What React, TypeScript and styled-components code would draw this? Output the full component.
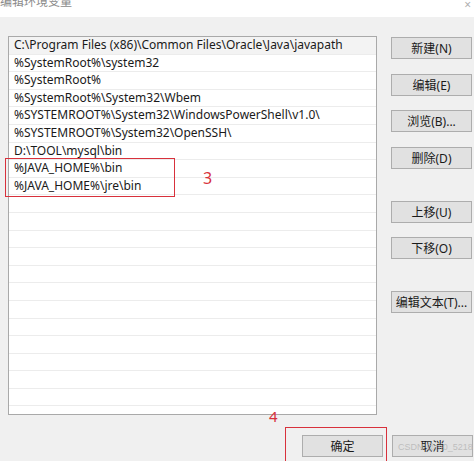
import React from 'react';
import styled, { createGlobalStyle } from 'styled-components';

const GlobalStyle = createGlobalStyle`
    html, body {
        margin: 0;
        padding: 0;
    }
    body {
        width: 474px;
        height: 461px;
        overflow: hidden;
        background: #f0f0f0;
        font-family: "Noto Sans", "Noto Sans CJK SC", sans-serif;
    }
`

const Dialog = styled.div`
    position: relative;
    width: 474px;
    height: 461px;
    overflow: hidden;
    background: #f0f0f0;
`

const TitleBar = styled.div`
    height: 17px;
    background: #ffffff;
    display: flex;
    justify-content: space-between;
    align-items: flex-start;
    overflow: hidden;
    padding: 0 3px 0 0;
`

const Title = styled.span`
    font-family: "Noto Sans CJK SC", sans-serif;
    font-size: 12px;
    line-height: 12px;
    color: #8a8a8a;
    margin-top: -5px;
`

const Close = styled.span`
    font-size: 12px;
    line-height: 10px;
    color: #b0b0b0;
`

const Main = styled.div`
    display: flex;
    padding: 19px 1px 0 8px;
    gap: 14px;
`

const List = styled.div`
    width: 369px;
    height: 379px;
    box-sizing: border-box;
    border: 1px solid #a9a9a9;
    background: #ffffff;
    overflow: hidden;
`

const Row = styled.div<{ $selected?: boolean }>`
    height: 17.6px;
    box-sizing: border-box;
    border-bottom: 1px solid #ececec;
    padding-left: 5px;
    font-size: 12px;
    line-height: 16.6px;
    color: #1a1a1a;
    white-space: nowrap;
    background: ${p => (p.$selected ? '#f3f3f3' : '#ffffff')};
`

const Side = styled.div`
    display: flex;
    flex-direction: column;
    padding-top: 1px;
    gap: 14.5px;
`

const Button = styled.div<{ $spaced?: boolean }>`
    width: 81px;
    height: 22px;
    box-sizing: border-box;
    border: 1px solid #adadad;
    background: #e1e1e1;
    display: flex;
    align-items: center;
    justify-content: center;
    font-family: "Noto Sans", "Noto Sans CJK SC", sans-serif;
    font-size: 12px;
    color: #1a1a1a;
    margin-top: ${p => (p.$spaced ? '17.5px' : '0')};
`

const Footer = styled.div`
    display: flex;
    justify-content: flex-end;
    gap: 9px;
    padding: 20px 1px 0 0;
`

const Mark = styled.div<{ $x: number; $y: number; $w: number; $h: number }>`
    position: absolute;
    left: ${p => p.$x}px;
    top: ${p => p.$y}px;
    width: ${p => p.$w}px;
    height: ${p => p.$h}px;
    border: 1.5px solid #d8313c;
    box-sizing: border-box;
`

const Label = styled.span<{ $x: number; $y: number; $size: number }>`
    position: absolute;
    left: ${p => p.$x}px;
    top: ${p => p.$y}px;
    font-family: "Noto Sans", sans-serif;
    font-size: ${p => p.$size}px;
    line-height: 1;
    color: #d8313c;
`

const Watermark = styled.span`
    position: absolute;
    left: 398px;
    top: 442px;
    font-family: "Liberation Sans", sans-serif;
    font-size: 9px;
    color: rgba(185, 185, 185, 0.9);
    white-space: nowrap;
`

const paths = [
    'C:\\Program Files (x86)\\Common Files\\Oracle\\Java\\javapath',
    '%SystemRoot%\\system32',
    '%SystemRoot%',
    '%SystemRoot%\\System32\\Wbem',
    '%SYSTEMROOT%\\System32\\WindowsPowerShell\\v1.0\\',
    '%SYSTEMROOT%\\System32\\OpenSSH\\',
    'D:\\TOOL\\mysql\\bin',
    '%JAVA_HOME%\\bin',
    '%JAVA_HOME%\\jre\\bin',
];

const rows = [...paths, ...Array(13).fill('')];

const App = () => {
    return (
        <Dialog>
            <GlobalStyle />
            <TitleBar>
                <Title>编辑环境变量</Title>
                <Close>×</Close>
            </TitleBar>

            <Main>
                <List>
                    {rows.map((text, i) => (
                        <Row key={i} $selected={i === 0}>{text}</Row>
                    ))}
                </List>

                <Side>
                    <Button>新建(N)</Button>
                    <Button>编辑(E)</Button>
                    <Button>浏览(B)...</Button>
                    <Button>删除(D)</Button>
                    <Button $spaced>上移(U)</Button>
                    <Button>下移(O)</Button>
                    <Button $spaced>编辑文本(T)...</Button>
                </Side>
            </Main>

            <Footer>
                <Button>确定</Button>
                <Button>取消</Button>
            </Footer>

            <Mark $x={5} $y={158} $w={170} $h={39} />
            <Label $x={203} $y={170} $size={16}>3</Label>
            <Mark $x={285} $y={427} $w={102} $h={40} />
            <Label $x={269} $y={409} $size={15}>4</Label>
            <Watermark>CSDN @m0_5218</Watermark>
        </Dialog>
    );
};

export default App;
